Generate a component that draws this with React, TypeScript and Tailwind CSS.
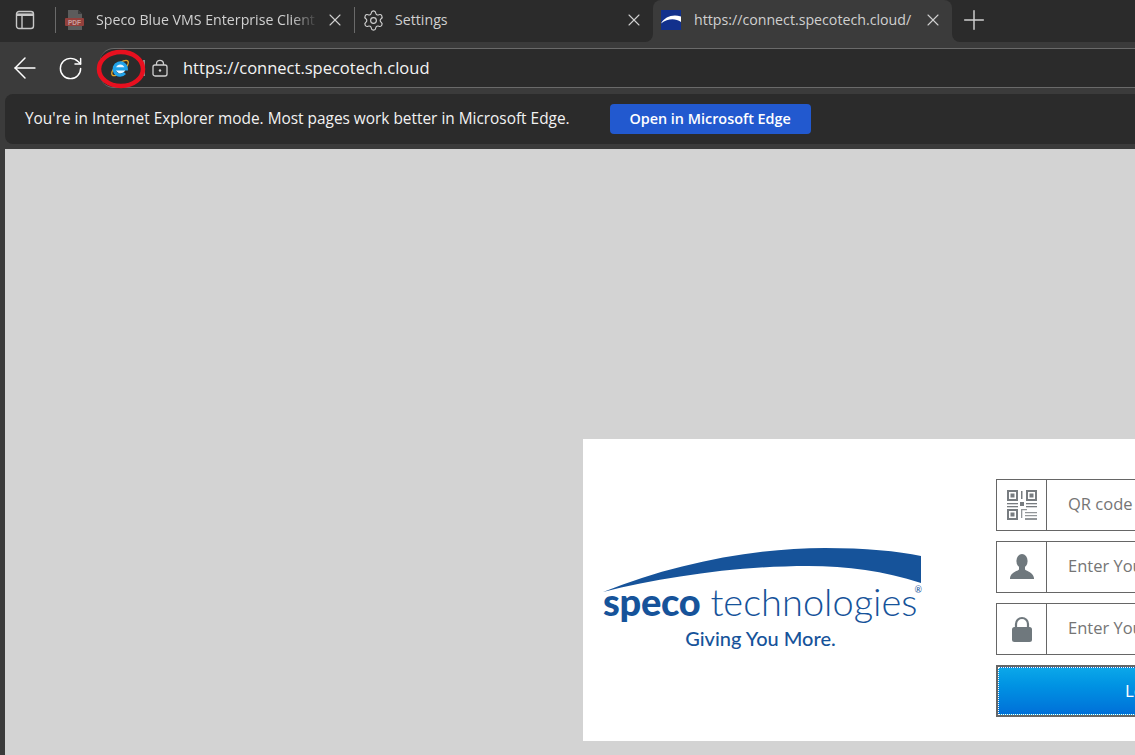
import { ArrowLeft, Plus, RotateCw, Settings, X } from "lucide-react";

const uiFont = "font-['Open_Sans','Noto_Sans',sans-serif]";

function PdfIcon() {
  return (
    <svg width="19" height="20" viewBox="0 0 19 20" className="shrink-0">
      <path d="M3 0h10l4 4v16H3z" fill="#5c5c5c" />
      <path d="M13 0l4 4h-4z" fill="#3c3c3c" />
      <rect x="0" y="8" width="19" height="8" rx="1" fill="#93403c" />
      <text x="9.5" y="14.5" textAnchor="middle" fontSize="6.5" fontWeight="700" fill="#c9a0a0" fontFamily="Liberation Sans">PDF</text>
    </svg>
  );
}

function TabsIcon() {
  return (
    <svg width="20" height="20" viewBox="0 0 20 20" fill="none" stroke="#c8c8c8" strokeWidth="1.4">
      <rect x="1.5" y="1.5" width="17" height="17" rx="2.5" />
      <path d="M2 4.7h16" strokeWidth="2.6" />
      <path d="M7 5v13" />
    </svg>
  );
}

function SpecoFavicon() {
  return (
    <svg width="20" height="20" viewBox="0 0 20 20" className="shrink-0">
      <rect width="20" height="20" fill="#12308c" />
      <path d="M0 13.5C4 7 11 4 20 6.5V12C14 8 7 8.5 0 13.5Z" fill="#fff" />
    </svg>
  );
}

function IeIcon() {
  return (
    <svg width="22" height="22" viewBox="0 0 22 22" fill="none">
      <ellipse cx="11" cy="11" rx="10.5" ry="4.2" transform="rotate(-42 11 11)" stroke="#e3a72a" strokeWidth="1.2" />
      <circle cx="11.5" cy="11.5" r="5" fill="#eaf7ff" />
      <path d="M5.5 11.8H17.3A6.1 6.1 0 1 0 15.8 16" stroke="#22a3ea" strokeWidth="3.2" />
    </svg>
  );
}

function LockOutline() {
  return (
    <svg width="18" height="18" viewBox="0 0 18 18" fill="none" stroke="#cfcfcf" strokeWidth="1.3">
      <rect x="2" y="6" width="14" height="11" rx="2" />
      <path d="M5.5 6V4.8a3.5 3.5 0 0 1 7 0V6" />
      <circle cx="9" cy="11.5" r="1.2" fill="#cfcfcf" stroke="none" />
    </svg>
  );
}

function QrIcon() {
  return (
    <svg width="30" height="30" viewBox="0 0 30 30" fill="#777c80">
      <path fillRule="evenodd" d="M0 0h11v11H0zM2 2v7h7V2z" />
      <rect x="3.5" y="3.5" width="4" height="4" />
      <path fillRule="evenodd" d="M19 0h11v11H19zM21 2v7h7V2z" />
      <rect x="22.5" y="3.5" width="4" height="4" />
      <path fillRule="evenodd" d="M0 19h11v11H0zM2 21v7h7v-7z" />
      <rect x="3.5" y="22.5" width="4" height="4" />
      <rect x="14" y="1" width="1.5" height="8" />
      <rect x="0" y="13" width="11" height="1.3" />
      <rect x="0" y="16" width="11" height="1.3" />
      <rect x="13" y="12" width="4" height="4" />
      <rect x="19" y="13" width="11" height="1.3" />
      <rect x="19" y="16" width="11" height="1.3" />
      <path d="M14 19h6v1.3h-4.7V28H14zM18 22h12v1.3H18zM18 25h12v1.3H18zM18 28h12v2H18z" opacity="0.8" />
    </svg>
  );
}

function PersonIcon() {
  return (
    <svg width="26" height="26" viewBox="0 0 26 26" fill="#6f787d">
      <ellipse cx="13" cy="7" rx="5.6" ry="7" />
      <path d="M10 12h6v3.5c2 2 8 2.5 9 8.500v1H1v-1C2 18 8 17.5 10 15.500z" />
    </svg>
  );
}

function PadlockIcon() {
  return (
    <svg width="22" height="26" viewBox="0 0 22 26">
      <path d="M5 12V8a6 6 0 0 1 12 0v4" fill="none" stroke="#6f787d" strokeWidth="2.2" />
      <rect x="1" y="11" width="20" height="15" rx="2.5" fill="#6f787d" />
    </svg>
  );
}

function Field({ icon, placeholder }: { icon: React.ReactNode; placeholder: string }) {
  return (
    <div className="flex h-[52px] w-[300px] border border-[#666]">
      <div className="flex w-[50px] shrink-0 items-center justify-center border-r border-[#666]">{icon}</div>
      <span className="truncate pl-[21px] text-[16.5px] leading-[48px] text-[#757575]">{placeholder}</span>
    </div>
  );
}

function SpecoLogo() {
  return (
    <div className="flex w-[320px] flex-col items-start text-[#16539a]">
      <svg width="320" height="46" viewBox="0 0 320 46" className="block">
        <path d="M0 45C70 17 150 1 222 1C262 1 295 4 318 9V36C280 24 245 19 205 19C135 19 60 30 0 45Z" fill="#16539a" />
      </svg>
      <div className="-mt-[10px] flex items-baseline whitespace-nowrap font-['Lato',sans-serif] leading-[36px]">
        <span className="text-[38px] font-black tracking-[-0.3px]">speco</span>
        <span className="ml-[10px] text-[38px] font-light">technologies</span>
        <span className="-ml-[3px] self-start text-[9px] leading-[14px]">®</span>
      </div>
      <div className="mt-[6px] w-full pr-[5px] text-center font-['Lato',sans-serif] text-[20px] leading-[26px] font-medium">Giving You More.</div>
    </div>
  );
}

export default function App() {
  return (
    <div className={`relative flex h-[755px] w-[1135px] flex-col overflow-hidden bg-[#3b3b3b] ${uiFont}`}>
      {/* tab strip */}
      <div className="flex h-[42px] shrink-0 bg-[linear-gradient(#2b2b2b_50%,#3b3b3b_50%)] text-[14.2px] text-[#d0d0d0]">
        <div className="flex rounded-br-lg bg-[#2b2b2b] pb-[2px]">
          <div className="flex w-[55px] items-center pl-[15px]">
            <TabsIcon />
          </div>
          <div className="my-[7px] w-px bg-[#6a6a6a]" />
          <div className="flex w-[298px] items-center pl-[9px]">
            <PdfIcon />
            <span className="ml-[12px] w-[222px] overflow-hidden whitespace-nowrap [mask-image:linear-gradient(to_right,black_88%,transparent)]">Speco Blue VMS Enterprise Client</span>
            <X size={20} strokeWidth={1.3} className="ml-[7px]" />
          </div>
          <div className="my-[7px] w-px bg-[#6a6a6a]" />
          <div className="flex w-[298px] items-center pl-[7px]">
            <Settings size={23} strokeWidth={1.2} />
            <span className="ml-[10px] w-[229px]">Settings</span>
            <X size={20} strokeWidth={1.3} />
          </div>
        </div>
        <div className="flex w-[299px] items-center rounded-t-lg bg-[#3b3b3b] pb-[2px] pl-[8px]">
          <SpecoFavicon />
          <span className="ml-[13px] w-[218px] truncate">https://connect.specotech.cloud/</span>
          <X size={20} strokeWidth={1.3} className="ml-[11px]" />
        </div>
        <div className="flex flex-1 items-center rounded-bl-lg bg-[#2b2b2b] pb-[2px] pl-[6px]">
          <Plus size={32} strokeWidth={1.1} />
        </div>
      </div>

      {/* toolbar */}
      <div className="flex h-[46px] shrink-0 items-center pt-[6px] text-white">
        <div className="flex w-[50px] justify-center">
          <ArrowLeft size={34} strokeWidth={1.05} />
        </div>
        <div className="flex w-[40px] justify-center">
          <RotateCw size={27} strokeWidth={1.3} />
        </div>
        <div className="ml-[10px] flex h-[40px] flex-1 items-center rounded-l-[14px] border-y border-[#6a6a6a] bg-[#2b2b2b] pl-[9px]">
          <IeIcon />
          <div className="ml-[12px] h-[16px] w-[2px] bg-[#8a8a8a]" />
          <div className="ml-[6px]">
            <LockOutline />
          </div>
          <span className="ml-[14px] text-[16.5px] text-[#f4f4f4]">https://connect.specotech.cloud</span>
        </div>
      </div>

      {/* IE mode bar */}
      <div className="mt-[6px] ml-[5px] flex h-[50px] shrink-0 items-center rounded-l-lg bg-[#2b2b2b] pl-[20px] text-[15.4px] text-[#f2f2f2]">
        <span>You're in Internet Explorer mode. Most pages work better in Microsoft Edge.</span>
        <button className="ml-[40px] h-[30px] w-[201px] rounded bg-[#2259cf] text-[14.4px] font-semibold text-white">Open in Microsoft Edge</button>
      </div>

      {/* page */}
      <div className="mt-[5px] ml-[5px] flex-1 overflow-hidden bg-[#d3d3d3] pt-[290px] pl-[578px]">
        <div className="flex h-[302px] w-[800px] bg-white">
          <div className="w-[413px] shrink-0 pt-[108px] pl-[20px]">
            <SpecoLogo />
          </div>
          <div className="flex shrink-0 flex-col gap-[10px] pt-[40px]">
            <Field icon={<QrIcon />} placeholder="QR code" />
            <Field icon={<PersonIcon />} placeholder="Enter Your Username" />
            <Field icon={<PadlockIcon />} placeholder="Enter Your Password" />
            <div className="h-[52px] w-[300px] border-2 border-[#666]">
              <div className="h-full border border-dotted border-white bg-gradient-to-b from-[#0ca7e9] to-[#0070d8] pl-[126px] text-[17px] leading-[46px] text-white">Login</div>
            </div>
          </div>
        </div>
      </div>

      {/* red circle annotation */}
      <svg width="52" height="44" viewBox="0 0 52 44" className="absolute top-[47px] left-[96px]">
        <ellipse cx="25" cy="22" rx="22" ry="17" fill="none" stroke="#e8101f" strokeWidth="4.5" />
      </svg>
    </div>
  );
}
